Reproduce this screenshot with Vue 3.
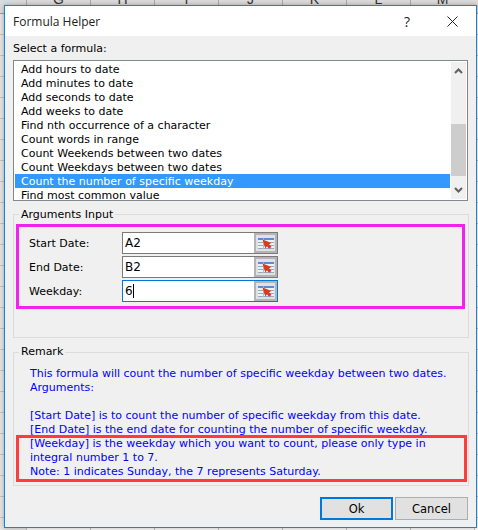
<script setup>
const formulas = [
  'Add hours to date',
  'Add minutes to date',
  'Add seconds to date',
  'Add weeks to date',
  'Find nth occurrence of a character',
  'Count words in range',
  'Count Weekends between two dates',
  'Count Weekdays between two dates',
  'Count the number of specific weekday',
  'Find most common value'
]
const selected = 'Count the number of specific weekday'
const args = [
  { label: 'Start Date:', value: 'A2' },
  { label: 'End Date:', value: 'B2' },
  { label: 'Weekday:', value: '6', focus: true }
]
const columns = ['G', 'H', 'I', 'J', 'K', 'L', 'M']
</script>

<template>
  <div class="sheet">
    <div class="headers">
      <span v-for="c in columns" :key="c" class="col">{{ c }}</span>
    </div>
    <div class="dialog">
      <div class="titlebar">
        <span class="title">Formula Helper</span>
        <span class="help">?</span>
        <svg class="close" width="11" height="11" viewBox="0 0 11 11">
          <path d="M0.5 0.5L10.5 10.5M10.5 0.5L0.5 10.5" stroke="#222" stroke-width="1" fill="none" />
        </svg>
      </div>
      <div class="body">
        <div class="select-label">Select a formula:</div>
        <div class="listbox">
          <div class="rows">
            <div v-for="f in formulas" :key="f" class="row" :class="{ sel: f === selected }">{{ f }}</div>
          </div>
          <div class="scrollbar">
            <svg class="arrow" width="9" height="6" viewBox="0 0 9 6"><path d="M1 5L4.5 1.5L8 5" stroke="#606060" stroke-width="2" fill="none" /></svg>
            <div class="track"><div class="thumb"></div></div>
            <svg class="arrow" width="9" height="6" viewBox="0 0 9 6"><path d="M1 1L4.5 4.5L8 1" stroke="#606060" stroke-width="2" fill="none" /></svg>
          </div>
        </div>

        <fieldset class="group args">
          <legend>Arguments Input</legend>
          <div class="magenta">
            <div v-for="a in args" :key="a.label" class="arg">
              <span class="arg-label">{{ a.label }}</span>
              <div class="input" :class="{ focus: a.focus }">
                <span class="value">{{ a.value }}</span>
                <span v-if="a.focus" class="caret"></span>
                <span class="refbtn">
                  <svg width="16" height="11" viewBox="0 0 16 11">
                    <rect x="0" y="0" width="16" height="11" fill="#eef1f6" />
                    <rect x="0" y="0" width="16" height="2" fill="#5f8ad0" />
                    <path d="M0 4.5H16M0 7.5H16M0 10.5H16" stroke="#9aa8bc" stroke-width="1" fill="none" />
                    <path d="M5.5 0.5V11" stroke="#b0bccd" stroke-width="1" fill="none" />
                    <path d="M4.5 1.5L13.5 5L11 6.2L13.5 8.7L11.3 10.8L8.8 8.2L7.4 10.6Z" fill="#d63a20" />
                  </svg>
                </span>
              </div>
            </div>
          </div>
        </fieldset>

        <fieldset class="group remark">
          <legend>Remark</legend>
          <div class="remark-text">
            <div>This formula will count the number of specific weekday between two dates.</div>
            <div>Arguments:</div>
            <div>&nbsp;</div>
            <div>[Start Date] is to count the number of specific weekday from this date.</div>
            <div>[End Date] is the end date for counting the number of specific weekday.</div>
            <div>[Weekday] is the weekday which you want to count, please only type in</div>
            <div>integral number 1 to 7.</div>
            <div>Note: 1 indicates Sunday, the 7 represents Saturday.</div>
          </div>
          <div class="redbox"></div>
        </fieldset>

        <div class="actions">
          <button class="btn ok" type="button">Ok</button>
          <button class="btn" type="button">Cancel</button>
        </div>
      </div>
    </div>
  </div>
</template>

<style>
html, body { margin: 0; background: #fff; }
</style>

<style scoped>
.sheet {
  width: 478px;
  height: 530px;
  overflow: hidden;
  position: relative;
  background-color: #fff;
  background-image:
    linear-gradient(#c4c4c4 1px, transparent 1px),
    linear-gradient(90deg, #e6e6e6 26px, transparent 26px),
    linear-gradient(90deg, #c4c4c4 1px, transparent 1px);
  background-size: 100% 21px, 26px 100%, 64px 100%;
  background-position: 0 13px, 0 0, 26px 0;
  background-repeat: repeat, no-repeat, repeat;
  font-family: "DejaVu Sans", Tahoma, sans-serif;
  font-size: 11px;
  color: #000;
}
.headers {
  box-sizing: border-box;
  height: 14px;
  display: flex;
  align-items: flex-start;
  padding-left: 26px;
  background: #dcdcdc;
  border-bottom: 1px solid #9f9f9f;
}
.col {
  width: 64px;
  flex: none;
  height: 5px;
  box-sizing: border-box;
  border-left: 1px solid #a8a8a8;
  display: flex;
  align-items: flex-end;
  justify-content: center;
  overflow: hidden;
  font-family: "Liberation Sans", sans-serif;
  font-size: 14px;
  line-height: 12px;
  color: #333;
}
.dialog {
  position: absolute;
  left: 4px;
  top: 5px;
  box-sizing: border-box;
  width: 473px;
  height: 523px;
  border: 1px solid #1883d7;
  box-shadow: 0 0 5px rgba(0, 0, 0, 0.3);
  background: #f0f0f0;
  display: flex;
  flex-direction: column;
}
.titlebar {
  height: 30px;
  flex: none;
  background: #fff;
  display: flex;
  align-items: center;
  padding-left: 8px;
  font-family: "Open Sans", sans-serif;
  font-size: 12px;
  color: #222;
}
.title { flex: 1; }
.help { width: 12px; margin-right: 34px; font-size: 14px; text-align: center; }
.close { margin-right: 18px; }
.body {
  flex: 1;
  min-height: 0;
  padding: 0 7px 0 8px;
  display: flex;
  flex-direction: column;
}
.select-label { height: 24px; line-height: 26px; }
.listbox {
  box-sizing: border-box;
  flex: 0 0 141px;
  min-height: 0;
  background: #fff;
  border: 1px solid #828790;
  padding: 1px;
  display: flex;
  margin-right: 1px;
}
.rows { flex: 1; overflow: hidden; margin-right: 1px; }
.row {
  height: 14px;
  line-height: 16px;
  padding-left: 6px;
  white-space: nowrap;
  overflow: hidden;
}
.row.sel { background: #3399ff; color: #fff; }
.scrollbar {
  width: 15px;
  background: #f0f0f0;
  display: flex;
  flex-direction: column;
  align-items: center;
}
.arrow { flex: none; margin: 6px 0; }
.track { flex: 1; width: 100%; display: flex; flex-direction: column; justify-content: flex-end; padding-bottom: 5px; }
.thumb { height: 52px; background: #cdcdcd; }
.group {
  margin: 0;
  padding: 0;
  border: 1px solid #dcdcdc;
  min-width: 0;
  position: relative;
  box-sizing: border-box;
}
.group legend {
  margin-left: 5px;
  padding: 0 2px;
  line-height: 14px;
  height: 14px;
}
.args { height: 131px; margin-top: 6px; flex: none; }
.args legend { line-height: 16px; }
.magenta {
  box-sizing: border-box;
  margin: 3px 3px 0 2px;
  height: 85px;
  border: 3px solid #f321f0;
  padding: 5px 0 0 10px;
  display: flex;
  flex-direction: column;
  gap: 2px;
}
.arg { display: flex; align-items: center; height: 22px; }
.arg-label { width: 93px; flex: none; }
.input {
  box-sizing: border-box;
  width: 156px;
  height: 22px;
  border: 1px solid #7a7a7a;
  background: #fff;
  display: flex;
  align-items: center;
  padding-left: 2px;
  font-size: 12px;
}
.input.focus { border-color: #0078d7; }
.value { line-height: 18px; }
.caret { width: 1px; height: 14px; background: #000; }
.refbtn {
  margin-left: auto;
  box-sizing: border-box;
  width: 23px;
  height: 20px;
  background: #e1e1e1;
  border: 2px solid #b4b4b4;
  display: flex;
  align-items: center;
  justify-content: center;
}
.remark { height: 141px; margin-top: 7px; flex: none; }
.remark-text {
  padding: 8px 0 0 16px;
  color: #0000ff;
  line-height: 14px;
  white-space: nowrap;
}
.redbox {
  position: absolute;
  left: 2px;
  right: 1px;
  top: 76px;
  height: 47px;
  box-sizing: border-box;
  border: 3px solid #ff3b3b;
}
.actions {
  display: flex;
  justify-content: flex-end;
  gap: 2px;
  margin: 11px 1px 0 0;
}
.btn {
  box-sizing: border-box;
  width: 73px;
  height: 23px;
  background: #e1e1e1;
  border: 1px solid #adadad;
  font-family: inherit;
  font-size: 11.5px;
  color: #000;
  padding: 0;
}
.btn.ok { border: 2px solid #0078d7; }
</style>
